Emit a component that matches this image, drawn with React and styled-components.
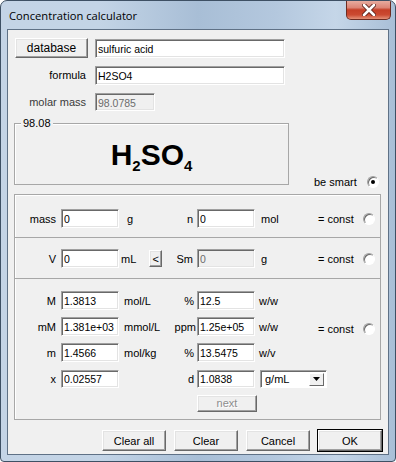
import styled, { createGlobalStyle } from 'styled-components';

const GlobalStyle = createGlobalStyle`
  html, body {
    margin: 0;
    padding: 0;
    background: #ffffff;
  }
  body {
    font-family: "Liberation Sans", Arial, sans-serif;
    font-size: 11px;
    color: #000;
  }
`

const Window = styled.div`
  width: 396px;
  height: 462px;
  box-sizing: border-box;
  display: flex;
  flex-direction: column;
  border: 1px solid #3e5064;
  border-radius: 7px 7px 4px 4px;
  padding: 0 6px 6px;
  overflow: hidden;
  background: linear-gradient(90deg, #c4d4e6 0%, #c3d4e6 25%, #a8bed6 50%, #b4c8de 70%, #c5d6e8 85%, #a9bfd7 100%);
`

const TitleBar = styled.div`
  height: 28px;
  display: flex;
  align-items: flex-start;
`

const Title = styled.span`
  font-family: "Open Sans", "Noto Sans", sans-serif;
  font-size: 11.2px;
  line-height: 29px;
  margin-left: 2px;
  color: #000;
`

const CloseButton = styled.div`
  margin-left: auto;
  margin-right: -2px;
  margin-top: -1px;
  width: 45px;
  height: 20px;
  box-sizing: border-box;
  border: 1px solid #6d2c22;
  border-top: none;
  border-radius: 0 0 5px 5px;
  background: linear-gradient(180deg, #e9b1a5 0%, #dc8576 40%, #c53f27 52%, #cb4a31 78%, #e49077 100%);
  display: flex;
  align-items: center;
  justify-content: center;
`

const Client = styled.div`
  flex: 1;
  border: 1px solid #5f7186;
  background: #f0f0f0;
  display: flex;
  flex-direction: column;
`

const TopGrid = styled.div`
  display: grid;
  grid-template-columns: 73px 190px;
  grid-auto-rows: 20px;
  column-gap: 7px;
  row-gap: 7px;
  margin: 8px 0 0 7px;
  align-items: center;
`

const Label = styled.span`
  text-align: right;
  padding-right: ${p => (p.$pad ?? 2)}px;
  color: ${p => (p.$muted ? '#3a3a3a' : '#000')};
  white-space: nowrap;
`

const TextBox = styled.input`
  box-sizing: border-box;
  width: ${p => p.$w || 58}px;
  height: ${p => p.$h || 19}px;
  margin: 0;
  padding: 1px 2px 0;
  font-family: "Liberation Sans", Arial, sans-serif;
  font-size: 10.5px;
  color: ${p => (p.disabled ? '#6d6d6d' : '#000')};
  background: ${p => (p.disabled ? '#f0f0f0' : '#ffffff')};
  border: 1px solid;
  border-color: #a0a0a0 #ffffff #ffffff #a0a0a0;
  box-shadow: inset 1px 1px 0 #696969, inset -1px -1px 0 #e3e3e3;
  outline: none;
`

const Button = styled.button`
  box-sizing: border-box;
  width: ${p => p.$w || 64}px;
  height: ${p => p.$h || 21}px;
  margin: 0;
  padding: 0;
  font-family: "Liberation Sans", Arial, sans-serif;
  font-size: ${p => p.$fs || 11}px;
  color: ${p => (p.disabled ? '#8d8d8d' : '#000')};
  background: #f0f0f0;
  border: 1px solid;
  border-color: #ffffff #696969 #696969 #ffffff;
  box-shadow: inset -1px -1px 0 #a0a0a0, inset 1px 1px 0 #e3e3e3
    ${p => (p.$default ? ', 0 0 0 1px #000' : '')};
  text-shadow: ${p => (p.disabled ? '1px 1px 0 #fff' : 'none')};
`

const InfoRow = styled.div`
  display: flex;
  margin: 11px 0 0 6px;
`

const GroupBox = styled.div`
  position: relative;
  width: 275px;
  height: 62px;
  box-sizing: border-box;
  border: 1px solid #a7a7a7;
  box-shadow: inset 1px 1px 0 #fff;
  display: flex;
  align-items: center;
  justify-content: center;
`

const Legend = styled.span`
  position: absolute;
  top: -7px;
  left: 6px;
  padding: 0 2px;
  background: #f0f0f0;
  line-height: 12px;
`

const Formula = styled.div`
  font-family: "Liberation Sans", Arial, sans-serif;
  font-weight: bold;
  font-size: 30px;
  line-height: 30px;
  margin-top: 2px;
  & sub {
    font-size: 15px;
    vertical-align: -6px;
    line-height: 0;
  }
`

const SmartBox = styled.div`
  display: flex;
  align-items: center;
  align-self: flex-end;
  margin: 0 0 -3px 25px;
`

const Radio = styled.span`
  display: inline-block;
  width: 12px;
  height: 12px;
  box-sizing: border-box;
  border-radius: 50%;
  border: 1px solid;
  border-color: #a0a0a0 #ffffff #ffffff #a0a0a0;
  box-shadow: inset 1px 1px 0 #696969;
  background: #fff;
  margin-left: ${p => p.$gap || 0}px;
  position: relative;
  flex-shrink: 0;
  &::after {
    content: '';
    display: ${p => (p.$checked ? 'block' : 'none')};
    position: absolute;
    left: 3px;
    top: 3px;
    width: 4px;
    height: 4px;
    border-radius: 50%;
    background: #000;
  }
`

const Panel = styled.div`
  margin: 9px 0 0 6px;
  width: 367px;
  box-sizing: border-box;
  border: 1px solid #a7a7a7;
  box-shadow: inset 1px 1px 0 #fff;
`

const Section = styled.div`
  display: grid;
  grid-template-columns: 46px 58px 53px 25px 59px 62px 1fr;
  grid-auto-rows: 19px;
  row-gap: 7px;
  align-items: center;
  padding: ${p => p.$pt}px 0 ${p => p.$pb}px;
  border-top: ${p => (p.$first ? 'none' : '1px solid #a7a7a7')};
`

const Unit = styled.span`
  padding-left: ${p => p.$pad ?? 5}px;
  display: flex;
  align-items: center;
  white-space: nowrap;
`

const Const = styled.div`
  grid-column: 7;
  display: flex;
  align-items: center;
  padding-right: 4px;
  grid-row: ${p => p.$rows || 'auto'};
  align-self: ${p => (p.$rows ? 'start' : 'center')};
  margin-top: ${p => (p.$rows ? 6 : 0)}px;
`

const Select = styled.div`
  grid-column: 6 / 8;
  justify-self: start;
  margin-left: 4px;
  width: 67px;
  height: 18px;
  box-sizing: border-box;
  border: 1px solid;
  border-color: #a0a0a0 #ffffff #ffffff #a0a0a0;
  box-shadow: inset 1px 1px 0 #696969;
  background: #fff;
  display: flex;
  align-items: stretch;
  padding: 2px 2px 1px 2px;
`

const SelectText = styled.span`
  flex: 1;
  padding-left: 2px;
  line-height: 13px;
`

const DropButton = styled.span`
  width: 15px;
  box-sizing: border-box;
  background: #f0f0f0;
  border: 1px solid;
  border-color: #ffffff #696969 #696969 #ffffff;
  display: flex;
  align-items: center;
  justify-content: center;
`

const ButtonBar = styled.div`
  display: flex;
  justify-content: flex-end;
  gap: 8px;
  margin: 10px 6px 0 0;
`

function CloseIcon() {
  return (
    <svg width="14" height="12" viewBox="0 0 14 12">
      <path d="M2 1 L12 11 M12 1 L2 11" stroke="#5a2018" strokeWidth="4.4" strokeLinecap="round" />
      <path d="M2 1 L12 11 M12 1 L2 11" stroke="#ffffff" strokeWidth="2.6" strokeLinecap="round" />
    </svg>
  )
}

function Arrow() {
  return (
    <svg width="7" height="4" viewBox="0 0 7 4">
      <path d="M0 0 H7 L3.5 4 Z" fill="#000" />
    </svg>
  )
}

function App() {
  return (
    <>
      <GlobalStyle />
      <Window>
        <TitleBar>
          <Title>Concentration calculator</Title>
          <CloseButton><CloseIcon /></CloseButton>
        </TitleBar>
        <Client>
          <TopGrid>
            <Button $w={73} $h={20} $fs={12}>database</Button>
            <TextBox $w={190} defaultValue="sulfuric acid" />
            <Label>formula</Label>
            <TextBox $w={190} defaultValue="H2SO4" />
            <Label $muted>molar mass</Label>
            <TextBox $w={60} $h={18} disabled defaultValue="98.0785" />
          </TopGrid>

          <InfoRow>
            <GroupBox>
              <Legend>98.08</Legend>
              <Formula>H<sub>2</sub>SO<sub>4</sub></Formula>
            </GroupBox>
            <SmartBox>
              be smart
              <Radio $checked $gap={10} />
            </SmartBox>
          </InfoRow>

          <Panel>
            <Section $first $pt={14} $pb={9}>
              <Label $pad={5}>mass</Label>
              <TextBox defaultValue="0" />
              <Unit $pad={8}>g</Unit>
              <Label $pad={4}>n</Label>
              <TextBox defaultValue="0" />
              <Unit>mol</Unit>
              <Const>= const<Radio $gap={9} /></Const>
            </Section>

            <Section $pt={11} $pb={10}>
              <Label $pad={5}>V</Label>
              <TextBox defaultValue="0" />
              <Unit $pad={2}>
                mL
                <Button $w={13} $h={17} style={{ marginLeft: 13 }}>&lt;</Button>
              </Unit>
              <Label $pad={4}>Sm</Label>
              <TextBox disabled defaultValue="0" />
              <Unit>g</Unit>
              <Const>= const<Radio $gap={9} /></Const>
            </Section>

            <Section $pt={12} $pb={5}>
              <Label $pad={5}>M</Label>
              <TextBox defaultValue="1.3813" />
              <Unit>mol/L</Unit>
              <Label $pad={3}>%</Label>
              <TextBox defaultValue="12.5" />
              <Unit $pad={3}>w/w</Unit>
              <span />

              <Label $pad={5}>mM</Label>
              <TextBox defaultValue="1.381e+03" />
              <Unit>mmol/L</Unit>
              <Label $pad={1}>ppm</Label>
              <TextBox defaultValue="1.25e+05" />
              <Unit $pad={3}>w/w</Unit>
              <Const $rows="2 / 4">= const<Radio $gap={9} /></Const>

              <Label $pad={5}>m</Label>
              <TextBox defaultValue="1.4566" />
              <Unit>mol/kg</Unit>
              <Label $pad={3}>%</Label>
              <TextBox defaultValue="13.5475" />
              <Unit $pad={3}>w/v</Unit>

              <Label $pad={5}>x</Label>
              <TextBox $h={18} defaultValue="0.02557" />
              <span />
              <Label $pad={3}>d</Label>
              <TextBox $h={18} defaultValue="1.0838" />
              <Select>
                <SelectText>g/mL</SelectText>
                <DropButton><Arrow /></DropButton>
              </Select>

              <Button disabled $w={60} $h={17} style={{ gridColumn: '5', marginTop: -3 }}>next</Button>
            </Section>
          </Panel>

          <ButtonBar>
            <Button>Clear all</Button>
            <Button>Clear</Button>
            <Button>Cancel</Button>
            <Button $default>OK</Button>
          </ButtonBar>
        </Client>
      </Window>
    </>
  )
}

export default App;
